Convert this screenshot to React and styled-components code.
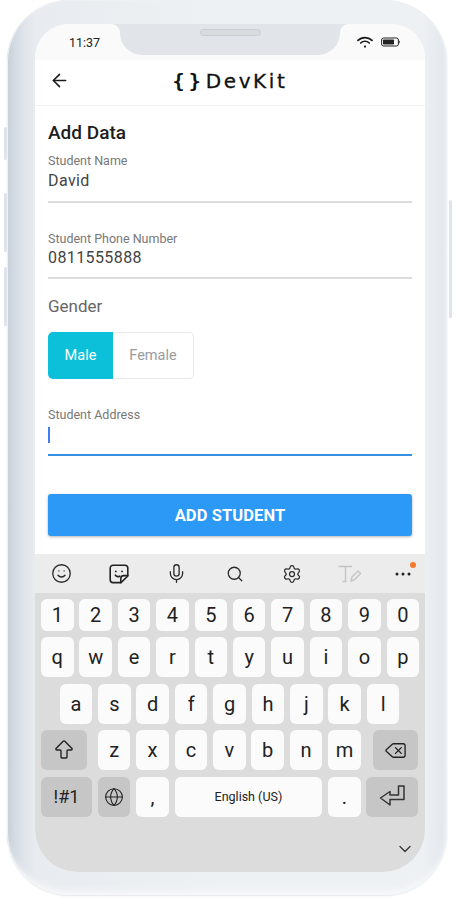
import React from "react";
import styled, { createGlobalStyle } from "styled-components";
import { ArrowLeft, ArrowBigUp, ChevronDown, Delete, Globe, Mic, Search, Settings, Smile } from "lucide-react";

const Global = createGlobalStyle`
  html, body { margin: 0; padding: 0; background: #fff; }
  body { font-family: Roboto, "Liberation Sans", sans-serif; overflow: hidden; }
`;

const Page = styled.div`
  width: 460px;
  height: 900px;
  padding-left: 7px;
  box-sizing: border-box;
  overflow: hidden;
`;

const Phone = styled.div`
  position: relative;
  box-sizing: border-box;
  width: 440px;
  height: 895px;
  padding: 24px 22px 0 28px;
  border-radius: 62px;
  background: linear-gradient(90deg, #c6ced9 0%, #d6dce4 2%, #e0e5eb 4%, #e8ecf0 6.5%, #eef1f4 50%, #eef1f4 94%, #e4e9ee 99%, #eef1f4 100%);
  box-shadow: inset 0 -8px 6px -4px #f6f8f9, inset 0 0 0 1px #eef1f4, 0 1px 2px #e2e6eb;
`;

const SideButton = styled.span`
  position: absolute;
  top: ${(p) => p.$top}px;
  ${(p) => (p.$right ? "right: -5px;" : "left: -3px;")}
  width: 3px;
  height: ${(p) => p.$h}px;
  border-radius: 2px;
  background: #dfe4ea;
`;

const Notch = styled.div`
  position: absolute;
  top: 24px;
  left: 113px;
  width: 220px;
  height: 31px;
  background: #e1e5ea;
  border-radius: 0 0 22px 22px;
  display: flex;
  justify-content: center;
  z-index: 2;
  &::before, &::after {
    content: "";
    position: absolute;
    top: 0;
    width: 8px;
    height: 8px;
  }
  &::before { left: -8px; background: radial-gradient(circle at 0 100%, transparent 7.5px, #e1e5ea 8px); }
  &::after { right: -8px; background: radial-gradient(circle at 100% 100%, transparent 7.5px, #e1e5ea 8px); }
`;

const Speaker = styled.span`
  width: 59px;
  height: 5px;
  margin-top: 5px;
  border-radius: 4px;
  background: #d8dcdf;
  border: 1px solid #c9ced4;
  box-sizing: content-box;
`;

const Screen = styled.div`
  position: relative;
  width: 390px;
  height: 848px;
  border-radius: 34px 34px 42px 42px;
  overflow: hidden;
  background: #fff;
  display: flex;
  flex-direction: column;
`;

const StatusBar = styled.div`
  height: 36px;
  flex: none;
  box-sizing: border-box;
  padding: 0 24px 0 34px;
  background: #fafafa;
  display: flex;
  align-items: center;
  justify-content: space-between;
  font-size: 12.5px;
  color: #222;
`;

const StatusIcons = styled.div`
  display: flex;
  align-items: center;
  gap: 8px;
`;

const AppBar = styled.header`
  position: relative;
  height: 46px;
  flex: none;
  box-sizing: border-box;
  border-bottom: 1px solid #f3f3f3;
  display: flex;
  align-items: center;
  justify-content: center;
  color: #1b1b1b;
`;

const BackButton = styled.span`
  position: absolute;
  left: 14px;
  top: 10px;
  display: flex;
`;

const Logo = styled.div`
  display: flex;
  align-items: center;
  gap: 9px;
  margin-bottom: 4px;
`;

const Braces = styled.span`
  font: 700 20px "DejaVu Sans Mono", monospace;
  letter-spacing: -4px;
  color: #111;
`;

const Wordmark = styled.span`
  font: 400 20px "DejaVu Sans", sans-serif;
  letter-spacing: 2.6px;
  -webkit-text-stroke: 0.3px #111;
  color: #111;
`;

const Form = styled.main`
  flex: 1;
  padding: 16px 13px 0;
`;

const Title = styled.h1`
  margin: 0 0 11px;
  font-size: 19px;
  line-height: 21px;
  font-weight: 500;
  color: #1d1d1d;
`;

const Field = styled.div`
  height: ${(p) => p.$h}px;
  margin-bottom: ${(p) => p.$mb}px;
  border-bottom: ${(p) => (p.$active ? "2px solid #3590e3" : "2px solid #dcdcdc")};
`;

const FieldLabel = styled.label`
  display: block;
  font-size: 12.5px;
  line-height: 14px;
  color: #777;
`;

const FieldValue = styled.div`
  margin-top: ${(p) => p.$mt}px;
  font-size: 16px;
  line-height: 20px;
  letter-spacing: 0.4px;
  color: #444;
`;

const Caret = styled.span`
  display: block;
  width: 2px;
  height: 16px;
  margin-top: 5px;
  background: #3f7cf6;
`;

const GroupLabel = styled.div`
  font-size: 17px;
  line-height: 19px;
  color: #666;
  margin-bottom: 16px;
`;

const Segments = styled.div`
  display: flex;
  width: 146px;
  height: 47px;
  margin-bottom: 29px;
`;

const Segment = styled.div`
  box-sizing: border-box;
  width: ${(p) => (p.$on ? "65px" : "81px")};
  border: ${(p) => (p.$on ? "0" : "1.5px solid #e8e8e8")};
  border-left: 0;
  border-radius: ${(p) => (p.$on ? "5px 0 0 5px" : "0 5px 5px 0")};
  background: ${(p) => (p.$on ? "#0cc0da" : "#fff")};
  color: ${(p) => (p.$on ? "#fff" : "#9b9b9b")};
  font-size: 14.5px;
  display: flex;
  align-items: center;
  justify-content: center;
`;

const SubmitButton = styled.button`
  display: block;
  width: 364px;
  height: 42px;
  border: 0;
  border-radius: 3px;
  background: #2b99f5;
  box-shadow: 0 1px 3px rgba(0, 0, 0, 0.3);
  color: #fff;
  font: 700 16.5px Roboto, sans-serif;
  letter-spacing: 0.1px;
`;

const Toolbar = styled.div`
  height: 39px;
  flex: none;
  box-sizing: border-box;
  padding-left: 14.5px;
  background: #ececec;
  display: flex;
  align-items: center;
  gap: 33.7px;
  color: #2a2a2a;
`;

const ToolIcon = styled.span`
  position: relative;
  width: 24px;
  height: 24px;
  margin-left: ${(p) => (p.$last ? "-4.5px" : "0")};
  display: flex;
  align-items: center;
  justify-content: center;
`;

const Badge = styled.span`
  position: absolute;
  top: 0;
  right: -1px;
  width: 6px;
  height: 6px;
  border-radius: 50%;
  background: #f47a2c;
`;

const Keyboard = styled.div`
  flex: none;
  height: 279px;
  box-sizing: border-box;
  padding: 6px 7px 0 6px;
  background: #dcdcdc;
  display: flex;
  flex-direction: column;
  gap: 6.4px;
  position: relative;
`;

const KeyRow = styled.div`
  display: flex;
  justify-content: ${(p) => (p.$center ? "center" : "flex-start")};
  gap: 5.9px;
  height: ${(p) => p.$h || 40}px;
`;

const Key = styled.div`
  flex: none;
  width: ${(p) => p.$w || 32.5}px;
  margin-left: ${(p) => p.$ml || 0}px;
  margin-right: ${(p) => p.$mr || 0}px;
  border-radius: 6px;
  background: ${(p) => (p.$fn ? "#c6c6c6" : "#fbfbfb")};
  color: #222;
  font-size: ${(p) => p.$size || 20}px;
  display: flex;
  align-items: center;
  justify-content: center;
`;

const Hide = styled.span`
  position: absolute;
  right: 10px;
  bottom: 13px;
  display: flex;
  color: #333;
`;

const Wifi = () => (
  <svg width="16" height="13" viewBox="0 0 16 13" fill="none" stroke="#1a1a1a" strokeWidth="1.7" strokeLinecap="round">
    <path d="M1 4.4a10 10 0 0 1 14 0" />
    <path d="M3.7 7a6.2 6.2 0 0 1 8.6 0" />
    <circle cx="8" cy="10.6" r="1.1" fill="#1a1a1a" stroke="none" />
  </svg>
);

const Battery = () => (
  <svg width="20" height="10" viewBox="0 0 20 10">
    <rect x="0.6" y="1" width="16.8" height="8" rx="2" fill="none" stroke="#222" strokeWidth="1" />
    <rect x="2" y="2.4" width="11" height="5.2" rx="0.8" fill="#222" />
    <path d="M18.3 3.5c1 .3 1 2.7 0 3z" fill="#222" />
  </svg>
);

const StickerFace = () => (
  <svg width="20" height="20" viewBox="0 0 20 20" fill="none" stroke="#222" strokeWidth="1.6" strokeLinecap="round" strokeLinejoin="round">
    <path d="M12 18.6H4a2.8 2.8 0 0 1-2.8-2.8V4A2.8 2.8 0 0 1 4 1.2h12A2.8 2.8 0 0 1 18.8 4v8z" />
    <path d="M18.8 11.6h-4a3 3 0 0 0-3 3v4" />
    <path d="M6.4 11.2c1 1.3 2.8 1.7 4.4 1" />
    <circle cx="6.8" cy="7.4" r="0.9" fill="#222" stroke="none" />
    <circle cx="13" cy="7.4" r="0.9" fill="#222" stroke="none" />
  </svg>
);

const TextPen = () => (
  <svg width="24" height="20" viewBox="0 0 24 20" fill="none" stroke="#c4c4c4" strokeWidth="1.4" strokeLinecap="round" strokeLinejoin="round">
    <path d="M1 2.5h12.5M7.5 2.5v15M5 17.5h3" />
    <path d="M13 17l1-4 6-6 2.6 2.6-6 6z" />
  </svg>
);

const Dots = () => (
  <svg width="18" height="6" viewBox="0 0 18 6" fill="#222">
    <circle cx="3" cy="3" r="1.5" />
    <circle cx="9" cy="3" r="1.5" />
    <circle cx="15" cy="3" r="1.5" />
  </svg>
);

const EnterArrow = () => (
  <svg width="27" height="23" viewBox="0 0 27 23" fill="none" stroke="#333" strokeWidth="1.5" strokeLinejoin="round">
    <path d="M19.5 1h5.5v13.5H11v5.5L1.5 13 11 6.5V10h8.5z" />
  </svg>
);

const tools = [
  <Smile size={21} strokeWidth={1.5} />,
  <StickerFace />,
  <Mic size={21} strokeWidth={1.5} />,
  <Search size={18} strokeWidth={1.7} />,
  <Settings size={20} strokeWidth={1.5} />,
  <TextPen />,
];

const letterRow = (letters) => letters.split("").map((k) => <Key key={k}>{k}</Key>);

export default function App() {
  return (
    <Page>
      <Global />
      <Phone>
        <SideButton $top={127} $h={33} />
        <SideButton $top={193} $h={59} />
        <SideButton $top={267} $h={59} />
        <SideButton $right $top={200} $h={118} />
        <Notch>
          <Speaker />
        </Notch>
        <Screen>
          <StatusBar>
            <span>11:37</span>
            <StatusIcons>
              <Wifi />
              <Battery />
            </StatusIcons>
          </StatusBar>
          <AppBar>
            <BackButton>
              <ArrowLeft size={21} strokeWidth={1.8} />
            </BackButton>
            <Logo>
              <Braces>{"{ }"}</Braces>
              <Wordmark>DevKit</Wordmark>
            </Logo>
          </AppBar>
          <Form>
            <Title>Add Data</Title>
            <Field $h={47} $mb={29}>
              <FieldLabel>Student Name</FieldLabel>
              <FieldValue $mt={3}>David</FieldValue>
            </Field>
            <Field $h={45} $mb={18}>
              <FieldLabel>Student Phone Number</FieldLabel>
              <FieldValue $mt={2}>0811555888</FieldValue>
            </Field>
            <GroupLabel>Gender</GroupLabel>
            <Segments>
              <Segment $on>Male</Segment>
              <Segment>Female</Segment>
            </Segments>
            <Field $h={46} $mb={38} $active>
              <FieldLabel>Student Address</FieldLabel>
              <Caret />
            </Field>
            <SubmitButton>ADD STUDENT</SubmitButton>
          </Form>
          <Toolbar>
            {tools.map((icon, i) => (
              <ToolIcon key={i}>{icon}</ToolIcon>
            ))}
            <ToolIcon $last>
              <Dots />
              <Badge />
            </ToolIcon>
          </Toolbar>
          <Keyboard>
            <KeyRow $h={32}>{letterRow("1234567890")}</KeyRow>
            <KeyRow>{letterRow("qwertyuiop")}</KeyRow>
            <KeyRow $center>{letterRow("asdfghjkl")}</KeyRow>
            <KeyRow>
              <Key $fn $w={46} $mr={5}>
                <ArrowBigUp size={24} strokeWidth={1.4} />
              </Key>
              {letterRow("zxcvbnm")}
              <Key $fn $w={45} $ml={6}>
                <Delete size={23} strokeWidth={1.4} />
              </Key>
            </KeyRow>
            <KeyRow>
              <Key $fn $w={51} $size={18}>!#1</Key>
              <Key $fn>
                <Globe size={20} strokeWidth={1.3} />
              </Key>
              <Key>,</Key>
              <Key $w={147.5} $size={12.5}>English (US)</Key>
              <Key>.</Key>
              <Key $fn $w={52}>
                <EnterArrow />
              </Key>
            </KeyRow>
            <Hide>
              <ChevronDown size={20} strokeWidth={1.5} />
            </Hide>
          </Keyboard>
        </Screen>
      </Phone>
    </Page>
  );
}
